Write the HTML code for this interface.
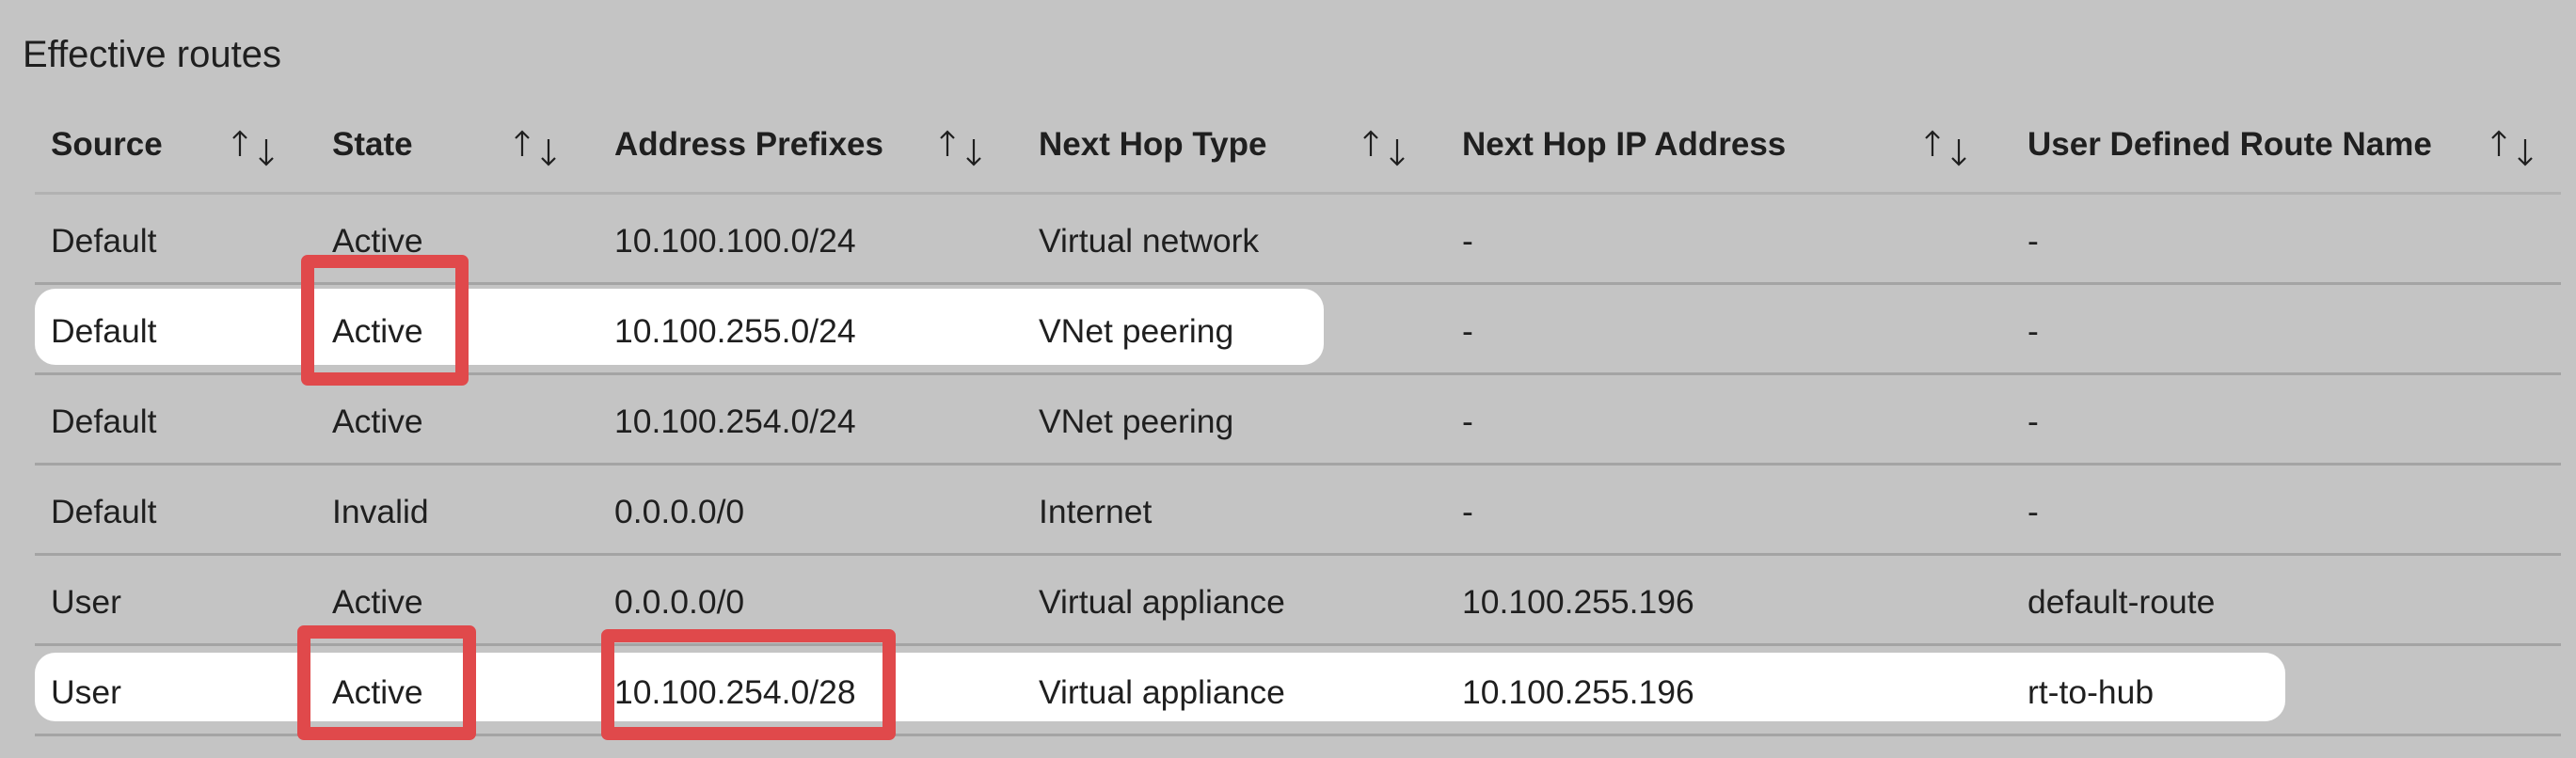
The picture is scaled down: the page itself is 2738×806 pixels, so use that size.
<!DOCTYPE html>
<html><head><meta charset="utf-8"><style>
html,body{margin:0;padding:0;}
body{width:2738px;height:806px;background:#c4c4c4;position:relative;overflow:hidden;font-family:"Liberation Sans",sans-serif;color:#1f1f1f;}
.t{position:absolute;white-space:nowrap;line-height:40px;font-size:35.5px;}
.h{font-weight:bold;font-size:35px;}
.line{position:absolute;left:37px;width:2685px;height:3px;background:#a4a4a4;}
.hl{position:absolute;background:#fff;border-radius:22px;}
.box{position:absolute;border:14px solid #e0494b;border-radius:7px;box-sizing:border-box;}
.ar{position:absolute;top:138px;width:54px;height:40px;}
</style></head><body>
<div class="t" style="left:24px;top:38px;font-size:40px;">Effective routes</div>

<div class="hl" style="left:37px;top:307px;width:1370px;height:81px;"></div>
<div class="hl" style="left:37px;top:694px;width:2392px;height:73px;"></div>

<div class="line" style="top:204px;background:#b2b2b2"></div>
<div class="line" style="top:300px"></div>
<div class="line" style="top:396px"></div>
<div class="line" style="top:492px"></div>
<div class="line" style="top:588px"></div>
<div class="line" style="top:684px"></div>
<div class="line" style="top:780px"></div>

<div class="t h" style="left:54px;top:134px">Source</div>
<div class="t h" style="left:353px;top:134px">State</div>
<div class="t h" style="left:653px;top:134px">Address Prefixes</div>
<div class="t h" style="left:1104px;top:134px">Next Hop Type</div>
<div class="t h" style="left:1554px;top:134px">Next Hop IP Address</div>
<div class="t h" style="left:2155px;top:134px">User Defined Route Name</div>

<svg class="ar" style="left:245px" viewBox="0 0 54 40"><g fill="none" stroke="#1f1f1f" stroke-width="2.2"><path d="M10 28V2M3 9L10 2L17 9"/><path d="M38 10V37M31 30L38 37L45 30"/></g></svg>
<svg class="ar" style="left:545px" viewBox="0 0 54 40"><g fill="none" stroke="#1f1f1f" stroke-width="2.2"><path d="M10 28V2M3 9L10 2L17 9"/><path d="M38 10V37M31 30L38 37L45 30"/></g></svg>
<svg class="ar" style="left:997px" viewBox="0 0 54 40"><g fill="none" stroke="#1f1f1f" stroke-width="2.2"><path d="M10 28V2M3 9L10 2L17 9"/><path d="M38 10V37M31 30L38 37L45 30"/></g></svg>
<svg class="ar" style="left:1447px" viewBox="0 0 54 40"><g fill="none" stroke="#1f1f1f" stroke-width="2.2"><path d="M10 28V2M3 9L10 2L17 9"/><path d="M38 10V37M31 30L38 37L45 30"/></g></svg>
<svg class="ar" style="left:2044px" viewBox="0 0 54 40"><g fill="none" stroke="#1f1f1f" stroke-width="2.2"><path d="M10 28V2M3 9L10 2L17 9"/><path d="M38 10V37M31 30L38 37L45 30"/></g></svg>
<svg class="ar" style="left:2646px" viewBox="0 0 54 40"><g fill="none" stroke="#1f1f1f" stroke-width="2.2"><path d="M10 28V2M3 9L10 2L17 9"/><path d="M38 10V37M31 30L38 37L45 30"/></g></svg>

<div class="t" style="left:54px;top:236px">Default</div><div class="t" style="left:353px;top:236px">Active</div><div class="t" style="left:653px;top:236px">10.100.100.0/24</div><div class="t" style="left:1104px;top:236px">Virtual network</div><div class="t" style="left:1554px;top:236px">-</div><div class="t" style="left:2155px;top:236px">-</div>
<div class="t" style="left:54px;top:332px">Default</div><div class="t" style="left:353px;top:332px">Active</div><div class="t" style="left:653px;top:332px">10.100.255.0/24</div><div class="t" style="left:1104px;top:332px">VNet peering</div><div class="t" style="left:1554px;top:332px">-</div><div class="t" style="left:2155px;top:332px">-</div>
<div class="t" style="left:54px;top:428px">Default</div><div class="t" style="left:353px;top:428px">Active</div><div class="t" style="left:653px;top:428px">10.100.254.0/24</div><div class="t" style="left:1104px;top:428px">VNet peering</div><div class="t" style="left:1554px;top:428px">-</div><div class="t" style="left:2155px;top:428px">-</div>
<div class="t" style="left:54px;top:524px">Default</div><div class="t" style="left:353px;top:524px">Invalid</div><div class="t" style="left:653px;top:524px">0.0.0.0/0</div><div class="t" style="left:1104px;top:524px">Internet</div><div class="t" style="left:1554px;top:524px">-</div><div class="t" style="left:2155px;top:524px">-</div>
<div class="t" style="left:54px;top:620px">User</div><div class="t" style="left:353px;top:620px">Active</div><div class="t" style="left:653px;top:620px">0.0.0.0/0</div><div class="t" style="left:1104px;top:620px">Virtual appliance</div><div class="t" style="left:1554px;top:620px">10.100.255.196</div><div class="t" style="left:2155px;top:620px">default-route</div>
<div class="t" style="left:54px;top:716px">User</div><div class="t" style="left:353px;top:716px">Active</div><div class="t" style="left:653px;top:716px">10.100.254.0/28</div><div class="t" style="left:1104px;top:716px">Virtual appliance</div><div class="t" style="left:1554px;top:716px">10.100.255.196</div><div class="t" style="left:2155px;top:716px">rt-to-hub</div>

<div class="box" style="left:320px;top:271px;width:178px;height:139px;"></div>
<div class="box" style="left:316px;top:665px;width:190px;height:122px;"></div>
<div class="box" style="left:639px;top:669px;width:313px;height:118px;"></div>
</body></html>
